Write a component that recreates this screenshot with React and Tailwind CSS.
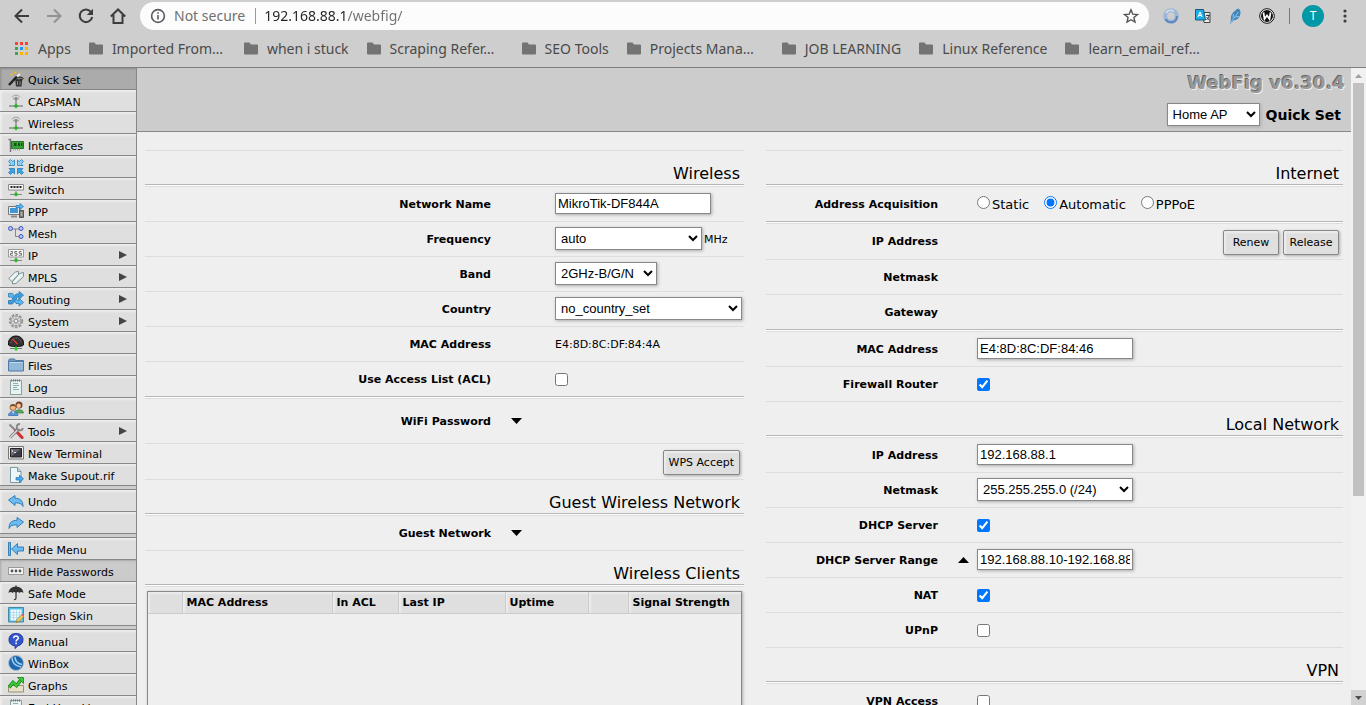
import { useState } from 'react';

// 16x16 sidebar icons
const antenna = (
    <>
        <path d="M4 4.500a4.500 4.500 0 0 1 8 0M5.500 5.500a3 3 0 0 1 5 0" fill="none" stroke="#999" strokeWidth=".9" />
        <path d="M5.500 6h5M8 4.500v8" stroke="#777" strokeWidth="1.200" />
        <path d="M1 13h14" stroke="#777" strokeWidth="1.200" />
        <path d="M8 10.500l2.500 2.500L8 15.500 5.500 13z" fill="#2db52d" />
    </>
);

const icons = {
    wand: (
        <>
            <path d="M7 7h7.500l-1 8.500H8z" fill="#333" />
            <ellipse cx="10.700" cy="7.500" rx="4.500" ry="1.500" fill="#777" stroke="#222" />
            <path d="M9.500 10v4M12 10v4" stroke="#888" />
            <path d="M1 14L9 5.500" stroke="#222" strokeWidth="2.500" />
            <path d="M9 5.500l3-2.500" stroke="#eee" strokeWidth="2" />
            <path d="M3.500 2v3M2 3.500h3M7 0v3M5.500 1.500h3M12 0v2" stroke="#e6b92c" />
        </>
    ),
    antenna,
    card: (
        <>
            <path d="M.5 2.500h2V15" fill="none" stroke="#777" strokeWidth="1.500" />
            <path d="M3.500 4.500h12v7h-12z" fill="#36a436" stroke="#247324" />
            <path d="M6 6h2.500v3H6zM10 6h2v3h-2zM13 6h1.500v3H13z" fill="#165416" />
            <path d="M5 12.500h8" stroke="#c9a52c" strokeDasharray="1 1" strokeWidth="2" />
        </>
    ),
    bridge: (
        <g fill="#8ed2f8" stroke="#277fbd" strokeWidth=".8">
            <path d="M.5 2.500l2-2 2.200 2.200L6.500 1v5.500H1l1.700-1.800z" />
            <path d="M15.500 2.500l-2-2-2.200 2.200L9.500 1v5.500H15l-1.700-1.800z" />
            <path fill="#3aa2e6" d="M.5 13.500l2 2 2.200-2.200L6.500 15V9.500H1l1.700 1.800z" />
            <path fill="#3aa2e6" d="M15.500 13.500l-2 2-2.200-2.200L9.500 15V9.500H15l-1.700 1.800z" />
        </g>
    ),
    switch: (
        <>
            <path d="M.5 3.500h15v5.500H.5z" fill="#f5f5f5" stroke="#888" />
            <path d="M2.500 6h11" stroke="#222" strokeWidth="2" strokeDasharray="2 1" />
            <path d="M8 10v4M2 13.500h12" stroke="#888" />
            <path d="M8 11l2.500 2.500L8 15.500l-2.500-2z" fill="#2db52d" />
        </>
    ),
    ppp: (
        <>
            <path d="M.5 3.500h11v8H.5z" fill="#e8eef2" stroke="#777" />
            <path d="M2 5h8v5H2z" fill="#3f97d8" />
            <path d="M3 13.500h6" stroke="#888" strokeWidth="2" />
            <path d="M11.500 7.500h4v7h-4z" fill="#777" stroke="#555" />
            <path d="M12.500 10h2M12.500 12h2" stroke="#ddd" />
            <path d="M8 2.500h4V.5l3.500 3-3.500 3v-2H8z" fill="#58b8f2" stroke="#2474ad" strokeWidth=".7" />
        </>
    ),
    mesh: (
        <>
            <path d="M3 4h10M7.500 4v7.500H13" fill="none" stroke="#888" />
            <g fill="#b5c8f8" stroke="#3c50c4">
                <circle cx="2.500" cy="3.500" r="2" />
                <circle cx="13" cy="3.500" r="2" />
                <circle cx="13" cy="11.500" r="2" />
            </g>
        </>
    ),
    ip: (
        <>
            <path d="M.5 2.500h15v7.500H.5z" fill="#f8f8f8" stroke="#999" />
            <path
                d="M2.500 4.500h2v1.800h-2v1.900h2.500M9 4.500H6.800v1.800H9v1.900H6.500M13.500 4.500h-2.200v1.800h2.200v1.900h-2.700"
                fill="none"
                stroke="#555"
                strokeWidth=".8"
            />
            <path d="M8 10v4M2 13.500h12" stroke="#888" />
            <path d="M8 11l2.500 2.500L8 15.500l-2.500-2z" fill="#2db52d" />
        </>
    ),
    mpls: (
        <g fill="#e4efef" stroke="#778888" strokeWidth=".9">
            <path d="M.8 9.500L7.500 2.800l3-.3v3L4 12.700z" />
            <path d="M4.500 12.500l7-8 4-1v4L8 14.500l-3.500.5z" />
            <path d="M6.500 12.500l6-6M2.500 10l5-5" stroke="#fff" />
        </g>
    ),
    routing: (
        <>
            <path
                d="M.5 2.500h4l5 7H11v-2.500l4.500 4.500L11 15v-2.500H8L3.500 6h-3z"
                fill="#60b8f0"
                stroke="#2678b4"
                strokeWidth=".8"
            />
            <path
                d="M.5 13h4l5-7H11v2.500l4.500-4.500L11 .5V3H8L3.500 9.500h-3z"
                fill="#3f9ee0"
                stroke="#2678b4"
                strokeWidth=".8"
            />
        </>
    ),
    gear: (
        <>
            <circle cx="8" cy="8" r="6.200" fill="none" stroke="#999" strokeWidth="2" strokeDasharray="2.600 1.400" />
            <circle cx="8" cy="8" r="5" fill="#ddd" stroke="#999" />
            <path d="M8 3v10M3 8h10M4.500 4.500l7 7M11.500 4.500l-7 7" stroke="#aaa" />
            <circle cx="8" cy="8" r="2" fill="#eee" stroke="#888" />
        </>
    ),
    gauge: (
        <>
            <path d="M.5 10C-.5 4 4 1 8 1s8.500 3 7.500 9c-1 2-14 2-15 0z" fill="#333" stroke="#111" />
            <path d="M3 8a5 5 0 0 1 10 0" fill="none" stroke="#888" strokeDasharray="1 1.500" />
            <path d="M9.500 9L4.500 4" stroke="#e33" strokeWidth="1.400" />
            <path d="M8 11v4M2 13.500h12" stroke="#777" />
            <path d="M8 11.500l2.500 2L8 16l-2.500-2.500z" fill="#2ecc2e" />
        </>
    ),
    folder: (
        <>
            <path d="M.5 3.500l1-1.500h5l1 1.500h8v10H.5z" fill="#6f9cc4" stroke="#4d7ba5" />
            <path d="M.5 4.500h15v9.500H.5z" fill="#93b9d8" stroke="#4d7ba5" />
            <path d="M1.500 5.500h13" stroke="#c2d9ea" />
        </>
    ),
    log: (
        <>
            <path d="M2.500 1.500h11v14h-11z" fill="#e8f2f2" stroke="#8ca0a0" />
            <path d="M3 1.500h10" stroke="#667777" strokeWidth="2" strokeDasharray="1 1" />
            <path d="M5 4.500h5M5 6.500h6M5 8.500h4M5 10.500h6" stroke="#8cb0b0" />
        </>
    ),
    users: (
        <>
            <circle cx="11" cy="4" r="3.500" fill="#7a3f22" />
            <circle cx="10.700" cy="4.700" r="2.200" fill="#f2c49a" />
            <path d="M6.500 12c0-4 9-4.500 9 0z" fill="#5aac5a" stroke="#357a35" strokeWidth=".7" />
            <circle cx="5" cy="6.500" r="3" fill="#f0b989" stroke="#8a5a30" strokeWidth=".8" />
            <path d="M2 6c0-4 6-4 6 0-2-1.500-4-1.500-6 0z" fill="#7b4d22" />
            <path d="M.5 14.500c0-5.500 9.500-5.500 9.500 0z" fill="#5b95d6" stroke="#2e64a4" strokeWidth=".7" />
            <path d="M4 10.500l1.200 2 1.300-2z" fill="#fff" />
        </>
    ),
    tools: (
        <>
            <path d="M1.500 1.500L9 9" stroke="#888" strokeWidth="2" />
            <path d="M8 8l6 6.500" stroke="#c33" strokeWidth="3.200" strokeLinecap="round" />
            <path d="M2 14.500l9-9" stroke="#777" strokeWidth="3" />
            <path d="M2 14.500l9-9" stroke="#ddd" strokeWidth="1.500" />
            <path d="M12 1a3.200 3.200 0 1 0 3 4" fill="none" stroke="#888" strokeWidth="1.800" />
        </>
    ),
    terminal: (
        <>
            <path d="M.5 1.500h15v12.500H.5z" fill="#eee" stroke="#777" />
            <path d="M2.500 3.500h11v8.500h-11z" fill="#3b3b45" stroke="#222" />
            <path d="M3 11.500V4h10z" fill="#666670" />
            <path d="M3.500 5l1.500 1-1.500 1M6 7.500h2" fill="none" stroke="#fff" strokeWidth=".8" />
        </>
    ),
    supout: (
        <>
            <path d="M2.500.5h7l3.500 4v11H2.500z" fill="#edf7fa" stroke="#7f9aa5" />
            <path d="M9.500.5v4H13" fill="#b9d3dd" stroke="#7f9aa5" />
            <path d="M8 10.500h3.500V8l4 4-4 3.500v-2.500H8z" fill="#4aa9ec" stroke="#2470ab" strokeWidth=".7" />
        </>
    ),
    undo: (
        <path
            d="M.5 7L7 2.500v2.800c5 0 8 2 8 8.200-1.500-3-3.500-3.700-8-3.700v2.700z"
            fill="#6cbcf0"
            stroke="#2977b2"
            strokeWidth=".9"
        />
    ),
    redo: (
        <path
            d="M15.500 7L9 2.500v2.800c-5 0-8 2-8 8.200 1.500-3 3.500-3.700 8-3.700v2.700z"
            fill="#6cbcf0"
            stroke="#2977b2"
            strokeWidth=".9"
        />
    ),
    hideMenu: (
        <g fill="#6cbcf0" stroke="#2977b2" strokeWidth=".9">
            <path d="M.5 1.500h2v13h-2z" />
            <path d="M3.500 8l6-5.500V6h6v4h-6v3.500z" />
        </g>
    ),
    password: (
        <>
            <path d="M.5 4.500h15v7H.5z" fill="#f4f4f4" stroke="#999" />
            <g fill="#555">
                <circle cx="4" cy="8" r="1.400" />
                <circle cx="8" cy="8" r="1.400" />
                <circle cx="12" cy="8" r="1.400" />
            </g>
        </>
    ),
    umbrella: (
        <>
            <path d="M.5 8C1 3.500 4 1.800 8 1.500c4 .3 7 2 7.500 6.500-1.500-1.500-3-1.500-4 0-1-1.500-2.500-1.500-3.500 0-1-1.500-2.500-1.500-3.500 0-1-1.500-2.500-1.500-4 0z" fill="#333" />
            <path d="M8 .5V13q0 1.800-2 1.500" fill="none" stroke="#333" strokeWidth="1.200" />
        </>
    ),
    skin: (
        <>
            <path d="M.5 .5h15v14.500H.5z" fill="#56bde6" stroke="#4389a8" />
            <path d="M2.500 2.500h11v11h-11z" fill="#f4fcff" />
            <path d="M2.500 5.500h11M2.500 8h11M2.500 10.500h11M5.500 2.500v11M8.500 2.500v11M11.500 2.500v11" stroke="#a5d8ee" strokeWidth=".8" />
            <path d="M8 15.500l1-3 5-5 2 2-5 5z" fill="#f4cf59" stroke="#94681e" strokeWidth=".7" />
            <path d="M13.500 8l1.300-1.200L16 8.500 15.300 10z" fill="#d66" />
        </>
    ),
    manual: (
        <>
            <path d="M8 .5c4.500 0 7 2.500 7 6.200 0 3.500-2 5.300-5 6L7 15.500l.2-2.700C3.500 12.500 1 10.500 1 6.700 1 3 3.500.5 8 .5z" fill="#3355cc" stroke="#2038a0" />
            <path d="M5.800 5.200C5.800 2.400 10.300 2.500 10.300 5c0 1.700-2.200 1.600-2.200 3.400M8.100 9.600v1.600" fill="none" stroke="#fff" strokeWidth="1.500" />
        </>
    ),
    winbox: (
        <>
            <circle cx="8" cy="8" r="7.500" fill="#1f67ac" stroke="#a8bccd" />
            <path d="M4 2.500c0 5 3 8.500 9 9.500M7 2c0 4 2 6.500 7 7.500" fill="none" stroke="#9ed2f5" strokeWidth="1.500" />
        </>
    ),
    graphs: (
        <>
            <path d="M.5 8.500h15v6.500H.5z" fill="#e8dfc8" stroke="#998f73" />
            <path d="M1 10.500l4-5 3.500 3 4-5" fill="none" stroke="#158415" strokeWidth="3.600" />
            <path d="M1 10.500l4-5 3.500 3 4-5" fill="none" stroke="#3ecb3e" strokeWidth="2" />
            <path d="M9.500.5h6v6z" fill="#3ecb3e" stroke="#158415" strokeWidth=".8" />
        </>
    ),
};

const menu = [
    [
        { label: 'Quick Set', icon: 'wand', active: true },
        { label: 'CAPsMAN', icon: 'antenna' },
        { label: 'Wireless', icon: 'antenna' },
        { label: 'Interfaces', icon: 'card' },
        { label: 'Bridge', icon: 'bridge' },
        { label: 'Switch', icon: 'switch' },
        { label: 'PPP', icon: 'ppp' },
        { label: 'Mesh', icon: 'mesh' },
        { label: 'IP', icon: 'ip', sub: true },
        { label: 'MPLS', icon: 'mpls', sub: true },
        { label: 'Routing', icon: 'routing', sub: true },
        { label: 'System', icon: 'gear', sub: true },
        { label: 'Queues', icon: 'gauge' },
        { label: 'Files', icon: 'folder' },
        { label: 'Log', icon: 'log' },
        { label: 'Radius', icon: 'users' },
        { label: 'Tools', icon: 'tools', sub: true },
        { label: 'New Terminal', icon: 'terminal' },
        { label: 'Make Supout.rif', icon: 'supout' },
    ],
    [
        { label: 'Undo', icon: 'undo' },
        { label: 'Redo', icon: 'redo' },
    ],
    [
        { label: 'Hide Menu', icon: 'hideMenu' },
        { label: 'Hide Passwords', icon: 'password', pressed: true },
        { label: 'Safe Mode', icon: 'umbrella' },
        { label: 'Design Skin', icon: 'skin' },
    ],
    [
        { label: 'Manual', icon: 'manual' },
        { label: 'WinBox', icon: 'winbox' },
        { label: 'Graphs', icon: 'graphs' },
        { label: 'End-User License', icon: 'log' },
    ],
];

const bookmarks = [
    { label: 'Imported From…', cut: true },
    { label: 'when i stuck' },
    { label: 'Scraping Refer…', cut: true },
    { label: 'SEO Tools' },
    { label: 'Projects Mana…', cut: true },
    { label: 'JOB LEARNING' },
    { label: 'Linux Reference' },
    { label: 'learn_email_ref…', cut: true },
];

const appDots = ['#f44336', '#f44336', '#f44336', '#34a853', '#2196f3', '#fbb300', '#34a853', '#fbb300', '#fbb300'];

function NavButton({ label, faded, children }) {
    return (
        <button aria-label={label} className={faded ? 'text-[#929292]' : 'text-[#3c3c3c]'}>
            <svg width="16" height="16" viewBox="0 0 16 16" fill="none" stroke="currentColor" strokeWidth="2">
                {children}
            </svg>
        </button>
    );
}

function BrowserBar() {
    return (
        <div className="shrink-0 border-b border-[#7f7f7f] bg-[#cecece] font-['Noto_Sans',sans-serif] text-sm text-[#4a4a4a]">
            <div className="flex h-8 items-center">
                <div className="flex items-center gap-4 px-3.5">
                    <NavButton label="Back">
                        <path d="M15 8H2M8 1.500L1.500 8L8 14.500" />
                    </NavButton>
                    <NavButton label="Forward" faded>
                        <path d="M1 8h13M8 1.500L14.500 8L8 14.500" />
                    </NavButton>
                    <NavButton label="Reload">
                        <path d="M13.200 4.200A6.300 6.300 0 1 0 14.200 9" />
                        <path d="M15 .8V7H8.800z" fill="currentColor" stroke="none" />
                    </NavButton>
                    <NavButton label="Home">
                        <path d="M.8 8.500L8 1.500l7.200 7M3.500 7v8h9V7" />
                    </NavButton>
                </div>
                <div className="flex h-7 flex-1 items-center rounded-full bg-[#fcfcfc] px-2.5">
                    <svg width="16" height="16" viewBox="0 0 16 16" fill="none" stroke="#5a5a5a" strokeWidth="1.600">
                        <circle cx="8" cy="8" r="6.400" />
                        <path d="M8 7v4.500M8 4.200v1.600" />
                    </svg>
                    <span className="ml-2 text-[#707070]">Not secure</span>
                    <span className="ml-2.5 h-4 w-px bg-[#999]" />
                    {/* host part is dark, the path after it is grey */}
                    <input
                        type="text"
                        aria-label="Address"
                        defaultValue="192.168.88.1/webfig/"
                        className="ml-2 min-w-0 flex-1 bg-[linear-gradient(90deg,#222_83px,#707070_83px)] bg-clip-text text-transparent outline-none"
                    />
                    <button aria-label="Bookmark this page">
                        <svg width="16" height="16" viewBox="0 0 16 16" fill="none" stroke="#555" strokeWidth="1.400">
                            <path d="M8 1.800l1.800 4.300 4.700.4-3.600 3 1.100 4.600L8 11.700l-4 2.400 1.100-4.600-3.600-3 4.700-.4z" />
                        </svg>
                    </button>
                </div>
                <div className="flex items-center gap-4 px-3.5">
                    <svg width="16" height="16" viewBox="0 0 16 16" fill="none">
                        <circle cx="8" cy="8" r="5.800" stroke="#9db7d8" strokeWidth="4" />
                        <path d="M2.500 11A6.200 6.200 0 0 0 8 14.300c5 0 6-4.300 6-6.300" stroke="#5d86bd" strokeWidth="2" />
                        <path d="M3 5c2-3 5-3.500 8-1.500" stroke="#d6e2f0" strokeWidth="1.500" />
                    </svg>
                    <svg width="16" height="16" viewBox="0 0 16 16">
                        <path d="M7.500 4.500h7.500v10H9z" fill="#eee" stroke="#444" />
                        <path d="M.5 1.500h8l2 10.500H.5z" fill="#1daee8" stroke="#1b5978" />
                        <path d="M3 9l2-5 2 5M3.700 7.500h2.600" fill="none" stroke="#fff" />
                        <path d="M11 7.500h4M13 6.500v1M14 8q-1 3-2.500 4M11.500 9l3 3.500" fill="none" stroke="#333" strokeWidth=".9" />
                    </svg>
                    <svg width="16" height="16" viewBox="0 0 16 16">
                        <path d="M11.500.5c2.500 2 2.500 5 1 8-1 2.300-3.500 3.500-6 4L3 16l1-5C3 7 7 2.500 11.500.5z" fill="#3f86bd" />
                        <path d="M3 15.500L11.500 4M6 10l.500-4M8 9l4-.500" stroke="#9cc8e6" fill="none" strokeWidth=".9" />
                    </svg>
                    <svg width="16" height="16" viewBox="0 0 16 16" fill="none">
                        <circle cx="8" cy="8" r="7.300" fill="#fff" stroke="#111" />
                        <circle cx="8" cy="8" r="6" fill="#111" />
                        <path d="M4.500 4.500l1 6.500L8 7.500l2.500 3.500 1-6.500" stroke="#fff" strokeWidth="1.700" />
                    </svg>
                </div>
                <span className="h-4 w-px bg-[#777]" />
                <button className="ml-3 size-[22px] rounded-full bg-[#0097a7] text-xs text-white">T</button>
                <button aria-label="Menu" className="mx-[18px]">
                    <svg width="6" height="16" viewBox="0 0 6 16" fill="#3c3c3c">
                        <circle cx="3" cy="3" r="1.600" />
                        <circle cx="3" cy="8" r="1.600" />
                        <circle cx="3" cy="13" r="1.600" />
                    </svg>
                </button>
            </div>
            <div className="flex h-[35px] items-center gap-[18px] overflow-hidden pb-0.5 pl-[15px] whitespace-nowrap">
                <a href="#apps" className="flex items-center gap-2.5">
                    <span className="grid grid-cols-3 gap-0.5">
                        {appDots.map((c, i) => (
                            <span key={i} className="size-[3px]" style={{ background: c }} />
                        ))}
                    </span>
                    Apps
                </a>
                {bookmarks.map((b) => (
                    <a key={b.label} href="#bookmark" className="flex items-center gap-[9px]">
                        <svg width="14" height="13" viewBox="0 0 14 13" fill="#737373">
                            <path d="M0 1.500Q0 .5 1 .5h4.500L7 2.500h6q1 0 1 1V11.500q0 1-1 1H1q-1 0-1-1z" />
                        </svg>
                        <span className={b.cut ? 'w-[114px]' : ''}>{b.label}</span>
                    </a>
                ))}
            </div>
        </div>
    );
}

function MenuItem({ item }) {
    let look = 'bg-[#dfdfdf] shadow-[inset_2px_2px_2px_#ececec]';
    if (item.active) look = 'bg-[#ababab] shadow-[inset_1px_1px_2px_#8f8f8f]';
    if (item.pressed) look = 'bg-[#cbcbcb] shadow-[inset_1px_1px_2px_#aaa]';

    return (
        <a href="#menu" className={`flex h-[22px] items-center border-b border-[#888] pr-2 pl-2 ${look}`}>
            <svg width="16" height="16" viewBox="0 0 16 16" className="mr-1 shrink-0">
                {icons[item.icon]}
            </svg>
            <span className="flex-1 pt-1 leading-4 whitespace-nowrap">{item.label}</span>
            {item.sub && (
                <svg width="9" height="8" viewBox="0 0 9 8" fill="#444">
                    <path d="M0 0l8 4-8 4z" />
                </svg>
            )}
        </a>
    );
}

function Sidebar() {
    return (
        <nav className="flex w-[137px] shrink-0 flex-col gap-[3px] overflow-hidden border-r border-[#888] bg-[#ccc]">
            {menu.map((group, i) => (
                <div key={i} className={i > 0 ? 'border-t border-[#888]' : ''}>
                    {group.map((item) => (
                        <MenuItem key={item.label} item={item} />
                    ))}
                </div>
            ))}
        </nav>
    );
}

function Divider() {
    return <div className="h-[3px] border-t border-b border-t-[#b5b5b5] border-b-[#ddd] bg-white" />;
}

function Heading({ children }) {
    return (
        <>
            <h2 className="flex h-[33px] items-end justify-end pr-1 text-base leading-5">{children}</h2>
            <Divider />
        </>
    );
}

// wide = label column takes the free space, otherwise the value column does
function Row({ label, id, wide, caret, last, tall, children }) {
    const labelClass = `pt-0.5 text-right font-bold ${wide ? 'flex-1' : 'w-[172px] shrink-0'}`;
    return (
        <>
            <div className={`flex items-center ${tall ? 'h-11' : 'h-[34px]'}`}>
                {id ? (
                    <label htmlFor={id} className={labelClass}>{label}</label>
                ) : (
                    <span className={labelClass}>{label}</span>
                )}
                <div className={wide ? 'w-16 shrink-0 pl-5' : 'w-[39px] shrink-0 pl-5'}>
                    {caret && (
                        <button aria-label={`Toggle ${label}`} className="block">
                            <svg width="11" height="6" viewBox="0 0 11 6">
                                <path d={caret === 'up' ? 'M0 6L5.500 0 11 6z' : 'M0 0h11L5.500 6z'} />
                            </svg>
                        </button>
                    )}
                </div>
                <div className={wide ? 'flex w-[189px] shrink-0 items-center' : 'flex flex-1 items-center'}>
                    {children}
                </div>
            </div>
            {last ? <Divider /> : <div className="h-px bg-[#ddd]" />}
        </>
    );
}

const box = "mb-px border border-[#888] bg-white font-['Liberation_Sans',Arial,sans-serif] text-[13px] shadow-[1px_1px_3px_#aaa]";

function TextBox({ id, value }) {
    return <input id={id} type="text" defaultValue={value} className={`h-[21px] w-[156px] px-0.5 ${box}`} />;
}

function Select({ id, value, width, label }) {
    return (
        <select id={id} aria-label={label} className={`h-[23px] pl-px ${width} ${box}`}>
            <option>{value}</option>
        </select>
    );
}

function Check({ id, on }) {
    return <input id={id} type="checkbox" defaultChecked={on} className="size-[13px]" />;
}

function Button({ children }) {
    return (
        <button className="h-[25px] min-w-14 rounded-[2px] border border-[#888] bg-[#dfdfdf] px-[5px] pt-0.5 shadow-[inset_2px_2px_2px_#ececec,1px_1px_3px_#aaa]">
            {children}
        </button>
    );
}

function HeadCell({ width, children }) {
    return (
        <th className={`border-r border-[#ccc] pt-px pl-1 shadow-[inset_2px_2px_2px_#ececec] last:border-r-0 ${width}`}>
            {children}
        </th>
    );
}

function WirelessColumn() {
    return (
        <div className="flex-[599] border-t border-[#ddd]">
            <Heading>Wireless</Heading>
            <Row wide label="Network Name" id="ssid"><TextBox id="ssid" value="MikroTik-DF844A" /></Row>
            <Row wide label="Frequency" id="freq">
                <Select id="freq" value="auto" width="w-[147px]" />
                <span className="ml-0.5 pt-0.5">MHz</span>
            </Row>
            <Row wide label="Band" id="band"><Select id="band" value="2GHz-B/G/N" width="w-[102px]" /></Row>
            <Row wide label="Country" id="country"><Select id="country" value="no_country_set" width="w-[187px]" /></Row>
            <Row wide label="MAC Address"><span className="pt-0.5">E4:8D:8C:DF:84:4A</span></Row>
            <Row wide label="Use Access List (ACL)" id="acl" last><Check id="acl" /></Row>
            <Row wide label="WiFi Password" caret="down" tall />
            <div className="flex h-9 items-center justify-end border-b border-[#ddd] pt-0.5 pr-1">
                <Button>WPS Accept</Button>
            </div>
            <Heading>Guest Wireless Network</Heading>
            <Row wide label="Guest Network" caret="down" />
            <Heading>Wireless Clients</Heading>
            <div className="mx-0.5 mt-1 h-52 border border-[#888] shadow-[1px_1px_3px_#aaa]">
                <table className="w-full table-fixed text-left">
                    <thead>
                        <tr className="h-[21px] border-b border-[#ccc] bg-[#dfdfdf]">
                            <HeadCell width="w-[34px]" />
                            <HeadCell width="w-[150px]">MAC Address</HeadCell>
                            <HeadCell width="w-[66px]">In ACL</HeadCell>
                            <HeadCell width="w-[107px]">Last IP</HeadCell>
                            <HeadCell width="w-[83px]">Uptime</HeadCell>
                            <HeadCell width="w-[40px]" />
                            <HeadCell>Signal Strength</HeadCell>
                        </tr>
                    </thead>
                </table>
            </div>
        </div>
    );
}

function InternetColumn() {
    const [mode, setMode] = useState('Automatic');

    return (
        <div className="flex-[577] border-t border-[#ddd]">
            <Heading>Internet</Heading>
            <Row label="Address Acquisition" last>
                <div className="flex gap-[15px] text-[13px]">
                    {['Static', 'Automatic', 'PPPoE'].map((m) => (
                        <label key={m} className="flex items-start gap-0.5 leading-4">
                            <input
                                type="radio"
                                name="acquisition"
                                className="size-[13px]"
                                checked={mode === m}
                                onChange={() => setMode(m)}
                            />
                            <span className="pt-px">{m}</span>
                        </label>
                    ))}
                </div>
            </Row>
            <div className="flex h-9 items-center border-b border-[#ddd] pt-0.5 pr-1">
                <span className="w-[172px] text-right font-bold">IP Address</span>
                <div className="flex flex-1 justify-end gap-1">
                    <Button>Renew</Button>
                    <Button>Release</Button>
                </div>
            </div>
            <Row label="Netmask" />
            <Row label="Gateway" last />
            <Row label="MAC Address" id="mac"><TextBox id="mac" value="E4:8D:8C:DF:84:46" /></Row>
            <Row label="Firewall Router" id="firewall"><Check id="firewall" on /></Row>
            <Heading>Local Network</Heading>
            <Row label="IP Address" id="ip"><TextBox id="ip" value="192.168.88.1" /></Row>
            <Row label="Netmask" id="mask"><Select id="mask" value="255.255.255.0 (/24)" width="w-[156px]" /></Row>
            <Row label="DHCP Server" id="dhcp"><Check id="dhcp" on /></Row>
            <Row label="DHCP Server Range" id="range" caret="up"><TextBox id="range" value="192.168.88.10-192.168.88.254" /></Row>
            <Row label="NAT" id="nat"><Check id="nat" on /></Row>
            <Row label="UPnP" id="upnp"><Check id="upnp" /></Row>
            <Heading>VPN</Heading>
            <Row label="VPN Access" id="vpn"><Check id="vpn" /></Row>
        </div>
    );
}

function ScrollBar() {
    return (
        <div className="flex w-[15px] shrink-0 flex-col items-center bg-[#f1f1f1]">
            <div className="flex h-[15px] items-center">
                <svg width="7" height="4" viewBox="0 0 7 4" fill="#a0a0a0"><path d="M0 4L3.500 0 7 4z" /></svg>
            </div>
            <div className="flex w-full flex-1 flex-col items-center">
                <div className="h-[68%] w-[11px] bg-[#c1c1c1]" />
            </div>
            <div className="flex h-[15px] w-full items-center justify-center bg-[#d2d2d2]">
                <svg width="7" height="4" viewBox="0 0 7 4" fill="#505050"><path d="M0 0h7L3.500 4z" /></svg>
            </div>
        </div>
    );
}

function App() {
    return (
        <div className="flex h-screen flex-col overflow-hidden bg-[#efefef] font-['DejaVu_Sans',Verdana,sans-serif] text-[11px] text-black">
            <BrowserBar />
            <div className="flex min-h-0 flex-1">
                <Sidebar />
                <main className="min-w-0 flex-1 overflow-hidden">
                    <header className="flex h-16 flex-col items-end border-b border-[#888] bg-[#ccc]">
                        <div className="pr-1.5 text-lg leading-[30px] font-bold text-[#999] [text-shadow:-1px_-1px_0_#666,1px_1px_0_#eee]">
                            WebFig v6.30.4
                        </div>
                        <div className="flex items-center gap-1.5 pt-[5px] pr-2.5">
                            <Select label="Mode" value="Home AP" width="w-[93px]" />
                            <h1 className="text-sm leading-5 font-bold">Quick Set</h1>
                        </div>
                    </header>
                    <div className="flex gap-[22px] px-2 pt-[18px]">
                        <WirelessColumn />
                        <InternetColumn />
                    </div>
                </main>
                <ScrollBar />
            </div>
        </div>
    );
}

export default App;
